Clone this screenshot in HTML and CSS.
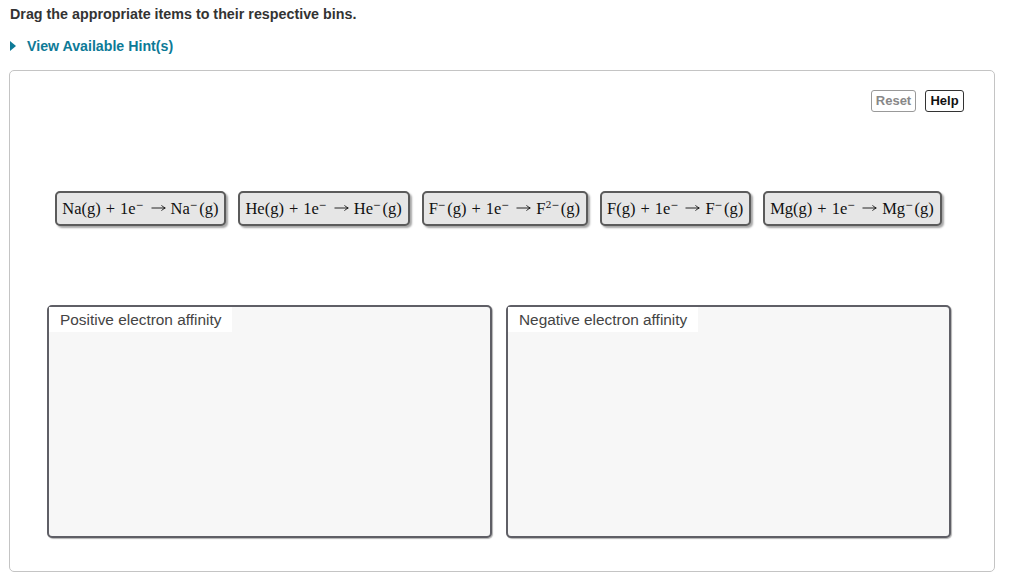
FILE: index.html
```html
<!DOCTYPE html>
<html>
<head>
<meta charset="utf-8">
<link rel="stylesheet" href="styles.css">
</head>
<body>
<div class="page">
  <p class="prompt">Drag the appropriate items to their respective bins.</p>
  <div class="hint"><span class="tri"></span><span class="hint-text">View Available Hint(s)</span></div>
  <div class="panel">
    <div class="tools">
      <button class="btn btn-reset">Reset</button>
      <button class="btn btn-help">Help</button>
    </div>
    <div class="chips">
      <div class="chip"><span class="m">Na(g)<span class="op">+</span>1e<sup>−</sup><svg class="ar" viewBox="0 0 15 8" width="15" height="8"><path d="M0.5 4H14M10.5 1.2Q12 3.3 14.3 4Q12 4.7 10.5 6.8" fill="none" stroke="#111" stroke-width="0.9"/></svg>Na<sup>−</sup>&#8202;(g)</span></div>
      <div class="chip"><span class="m">He(g)<span class="op">+</span>1e<sup>−</sup><svg class="ar" viewBox="0 0 15 8" width="15" height="8"><path d="M0.5 4H14M10.5 1.2Q12 3.3 14.3 4Q12 4.7 10.5 6.8" fill="none" stroke="#111" stroke-width="0.9"/></svg>He<sup>−</sup>&#8202;(g)</span></div>
      <div class="chip"><span class="m">F<sup>−</sup>&#8202;(g)<span class="op">+</span>1e<sup>−</sup><svg class="ar" viewBox="0 0 15 8" width="15" height="8"><path d="M0.5 4H14M10.5 1.2Q12 3.3 14.3 4Q12 4.7 10.5 6.8" fill="none" stroke="#111" stroke-width="0.9"/></svg>F<sup>2−</sup>&#8202;(g)</span></div>
      <div class="chip"><span class="m">F(g)<span class="op">+</span>1e<sup>−</sup><svg class="ar" viewBox="0 0 15 8" width="15" height="8"><path d="M0.5 4H14M10.5 1.2Q12 3.3 14.3 4Q12 4.7 10.5 6.8" fill="none" stroke="#111" stroke-width="0.9"/></svg>F<sup>−</sup>&#8202;(g)</span></div>
      <div class="chip"><span class="m">Mg(g)<span class="op">+</span>1e<sup>−</sup><svg class="ar" viewBox="0 0 15 8" width="15" height="8"><path d="M0.5 4H14M10.5 1.2Q12 3.3 14.3 4Q12 4.7 10.5 6.8" fill="none" stroke="#111" stroke-width="0.9"/></svg>Mg<sup>−</sup>&#8202;(g)</span></div>
    </div>
    <div class="bins">
      <div class="bin"><div class="bin-label">Positive electron affinity</div></div>
      <div class="bin"><div class="bin-label">Negative electron affinity</div></div>
    </div>
  </div>
</div>
</body>
</html>
```

FILE: styles.css
```css
* { box-sizing: border-box; }
html, body { margin: 0; padding: 0; background: #fff; }
body { font-family: "Liberation Sans", Arial, Helvetica, sans-serif; color: #333; }
.page { padding: 6px 30px 0 9px; width: 1024px; }
.prompt { margin: 0 0 0 1px; font-size: 14.3px; font-weight: bold; line-height: 17px; color: #333; }
.hint { display: flex; align-items: center; margin: 14px 0 0 1px; height: 17px; }
.tri { width: 0; height: 0; border-top: 5px solid transparent; border-bottom: 5px solid transparent; border-left: 6px solid #0d7a97; margin-right: 11px; }
.hint-text { font-size: 14.2px; font-weight: bold; color: #0d7a97; }
.panel { margin-top: 16px; width: 986px; height: 502px; border: 1px solid #c4c4c4; border-radius: 5px; padding: 19px 30px 0 37px; }
.tools { display: flex; justify-content: flex-end; gap: 9px; padding-right: 0; }
.btn { font-family: "Liberation Sans", Arial, sans-serif; font-size: 13px; font-weight: bold; background: #fff; border-radius: 3px; height: 22px; padding: 0; line-height: 18px; }
.btn-reset { color: #888; border: 1px solid #999; width: 45px; }
.btn-help { color: #111; border: 1px solid #333; width: 39px; }
.chips { display: flex; justify-content: center; gap: 12px; margin-top: 79px; padding-right: 14px; }
.chip { height: 35px; border: 2px solid #5b5b5b; border-radius: 5px; background: #e6e6e6; box-shadow: 2px 2px 2px rgba(0,0,0,0.35); padding: 0 6px 0 5px; display: flex; align-items: center; }
.m { font-family: "Liberation Serif", "Times New Roman", serif; font-size: 16.5px; color: #111; white-space: nowrap; }
.m sup { font-family: "DejaVu Serif", serif; font-size: 9.5px; vertical-align: 6px; line-height: 0; }
.op { margin: 0 5px; }
.ar { display: inline-block; vertical-align: 2px; margin: 0 5px 0 7px; }
.bins { display: flex; gap: 14px; margin-top: 79px; padding-right: 10px; }
.bin { width: 445px; height: 233px; border: 2px solid #5f5f66; border-radius: 5px; background: #f7f7f7; box-shadow: 1px 1px 1px rgba(0,0,0,0.3); }
.bin-label { display: inline-block; background: #fff; font-size: 15.4px; color: #444; padding: 4px 11px 4px 11px; line-height: 17px; }
```
